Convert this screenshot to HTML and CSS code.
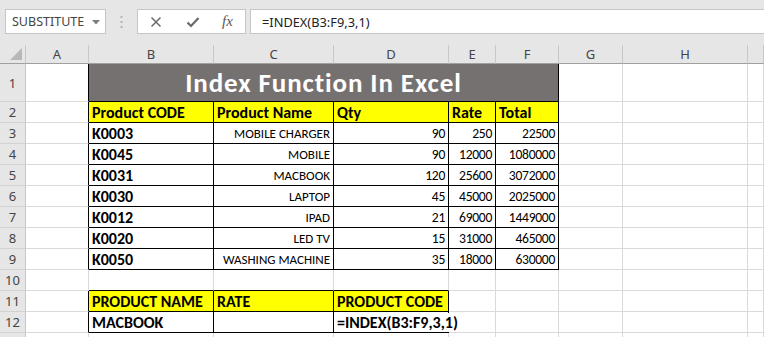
FILE: index.html
```html
<!DOCTYPE html>
<html>
<head>
<meta charset="utf-8">
<link rel="stylesheet" href="styles.css">
</head>
<body>
<div class="fbar">
  <div class="namebox"><span class="nametext">SUBSTITUTE</span><svg class="caret" width="8" height="5" viewBox="0 0 8 5"><path d="M0 0h8L4 4.5z" fill="#7b7b7b"/></svg></div>
  <div class="grip"><svg width="3" height="12" viewBox="0 0 3 12"><rect x="0.5" y="0" width="2" height="2" fill="#b4b4b4"/><rect x="0.5" y="5" width="2" height="2" fill="#b4b4b4"/><rect x="0.5" y="10" width="2" height="2" fill="#b4b4b4"/></svg></div>
  <div class="fxgroup">
    <svg class="ico" width="12" height="12" viewBox="0 0 12 12"><path d="M1.5 1.5l9 9M10.5 1.5l-9 9" stroke="#6a6a6a" stroke-width="1.5" fill="none"/></svg>
    <svg class="ico" width="14" height="12" viewBox="0 0 14 12"><path d="M1.5 6.5l3.5 3.5 7.5-8" stroke="#6a6a6a" stroke-width="2.2" fill="none"/></svg>
    <span class="fx">fx</span>
  </div>
  <div class="finput">=INDEX(B3:F9,3,1)</div>
</div>

<div class="sheet">
  <div class="corner"><svg width="12" height="12" viewBox="0 0 12 12"><path d="M12 0V12H0z" fill="#b8b8b8"/></svg></div>
  <div class="ch">A</div><div class="ch">B</div><div class="ch">C</div><div class="ch">D</div><div class="ch">E</div><div class="ch">F</div><div class="ch">G</div><div class="ch">H</div><div class="ch"></div>

  <div class="rh">1</div><div class="cell kb"></div><div class="cell title kb bb">Index Function In Excel</div><div class="cell"></div><div class="cell"></div><div class="cell"></div>

  <div class="rh">2</div><div class="cell kb"></div>
  <div class="cell y b kb bb">Product CODE</div><div class="cell y b kb bb">Product Name</div><div class="cell y b kb bb">Qty</div><div class="cell y b kb bb">Rate</div><div class="cell y b kb bb">Total</div>
  <div class="cell"></div><div class="cell"></div><div class="cell"></div>

  <div class="rh">3</div><div class="cell kb"></div>
  <div class="cell b kb bb">K0003</div><div class="cell sm r kb bb">MOBILE CHARGER</div><div class="cell n r kb bb">90</div><div class="cell n r kb bb">250</div><div class="cell n r kb bb">22500</div>
  <div class="cell"></div><div class="cell"></div><div class="cell"></div>

  <div class="rh">4</div><div class="cell kb"></div>
  <div class="cell b kb bb">K0045</div><div class="cell sm r kb bb">MOBILE</div><div class="cell n r kb bb">90</div><div class="cell n r kb bb">12000</div><div class="cell n r kb bb">1080000</div>
  <div class="cell"></div><div class="cell"></div><div class="cell"></div>

  <div class="rh">5</div><div class="cell kb"></div>
  <div class="cell b kb bb">K0031</div><div class="cell sm r kb bb">MACBOOK</div><div class="cell n r kb bb">120</div><div class="cell n r kb bb">25600</div><div class="cell n r kb bb">3072000</div>
  <div class="cell"></div><div class="cell"></div><div class="cell"></div>

  <div class="rh">6</div><div class="cell kb"></div>
  <div class="cell b kb bb">K0030</div><div class="cell sm r kb bb">LAPTOP</div><div class="cell n r kb bb">45</div><div class="cell n r kb bb">45000</div><div class="cell n r kb bb">2025000</div>
  <div class="cell"></div><div class="cell"></div><div class="cell"></div>

  <div class="rh">7</div><div class="cell kb"></div>
  <div class="cell b kb bb">K0012</div><div class="cell sm r kb bb">IPAD</div><div class="cell n r kb bb">21</div><div class="cell n r kb bb">69000</div><div class="cell n r kb bb">1449000</div>
  <div class="cell"></div><div class="cell"></div><div class="cell"></div>

  <div class="rh">8</div><div class="cell kb"></div>
  <div class="cell b kb bb">K0020</div><div class="cell sm r kb bb">LED TV</div><div class="cell n r kb bb">15</div><div class="cell n r kb bb">31000</div><div class="cell n r kb bb">465000</div>
  <div class="cell"></div><div class="cell"></div><div class="cell"></div>

  <div class="rh">9</div><div class="cell kb"></div>
  <div class="cell b kb bb">K0050</div><div class="cell sm r kb bb">WASHING MACHINE</div><div class="cell n r kb bb">35</div><div class="cell n r kb bb">18000</div><div class="cell n r kb bb">630000</div>
  <div class="cell"></div><div class="cell"></div><div class="cell"></div>

  <div class="rh">10</div><div class="cell"></div>
  <div class="cell bb"></div><div class="cell bb"></div><div class="cell bb"></div><div class="cell"></div><div class="cell"></div>
  <div class="cell"></div><div class="cell"></div><div class="cell"></div>

  <div class="rh">11</div><div class="cell kb"></div>
  <div class="cell y b kb bb">PRODUCT NAME</div><div class="cell y b kb bb">RATE</div><div class="cell y b kb bb">PRODUCT CODE</div><div class="cell"></div><div class="cell"></div>
  <div class="cell"></div><div class="cell"></div><div class="cell"></div>

  <div class="rh">12</div><div class="cell kb"></div>
  <div class="cell b kb bb">MACBOOK</div><div class="cell kb bb"></div><div class="cell b kb bb over"><span class="overtext">=INDEX(B3:F9,3,1)</span></div><div class="cell"></div><div class="cell"></div>
  <div class="cell"></div><div class="cell"></div><div class="cell"></div>

  <div class="rh"></div><div class="cell"></div>
  <div class="cell"></div><div class="cell"></div><div class="cell"></div><div class="cell"></div><div class="cell"></div>
  <div class="cell"></div><div class="cell"></div><div class="cell"></div>
</div>
</body>
</html>
```
FILE: styles.css
```css
html, body {
  margin: 0;
  padding: 0;
  background: #ffffff;
  overflow: hidden;
}
body {
  width: 764px;
  height: 337px;
  font-family: "Carlito", "Lato", "Liberation Sans", sans-serif;
}

/* formula bar */
.fbar {
  height: 45px;
  box-sizing: border-box;
  padding-top: 9px;
  background: #e6e6e6;
  display: flex;
  align-items: flex-start;
}
.namebox {
  margin-left: 5px;
  width: 101px;
  height: 25px;
  box-sizing: border-box;
  border: 1px solid #c6c6c6;
  background: #fff;
  display: flex;
  align-items: center;
  padding-left: 6px;
  padding-right: 5px;
}
.nametext {
  font-family: "Noto Sans", "Open Sans", sans-serif;
  font-size: 12.5px;
  color: #444;
  flex: 1;
}
.caret { margin-top: 1px; }
.grip {
  width: 31px;
  height: 25px;
  display: flex;
  align-items: center;
  justify-content: center;
}
.fxgroup {
  width: 109px;
  height: 25px;
  box-sizing: border-box;
  border: 1px solid #c6c6c6;
  background: #fff;
  display: flex;
  align-items: center;
  padding-left: 12px;
  gap: 24px;
}
.fx {
  font-family: "Liberation Serif", serif;
  font-style: italic;
  font-size: 15px;
  color: #5a5a5a;
  margin-left: -2px;
}
.finput {
  margin-left: 4px;
  flex: 1;
  height: 25px;
  box-sizing: border-box;
  border: 1px solid #c6c6c6;
  border-right: none;
  background: #fff;
  display: flex;
  align-items: center;
  padding-left: 11px;
  font-family: "Noto Sans", "Open Sans", sans-serif;
  font-size: 12.8px;
  color: #222;
}

/* sheet grid */
.sheet {
  display: grid;
  grid-template-columns: 26px 63px 125px 120px 115px 47px 63px 64px 125px 1fr;
  grid-template-rows: 19px 38px repeat(12, 21px);
}
.corner, .ch, .rh {
  background: #e6e6e6;
  box-sizing: border-box;
  color: #444;
  font-family: "Noto Sans", "Open Sans", sans-serif;
  font-size: 13px;
}
.corner {
  border-right: 1px solid #c8c8c8;
  border-bottom: 1px solid #a0a0a0;
  display: flex;
  align-items: flex-end;
  justify-content: flex-end;
  padding: 0 3px 3px 0;
}
.ch {
  border-right: 1px solid #c8c8c8;
  border-bottom: 1px solid #a0a0a0;
  display: flex;
  align-items: center;
  justify-content: center;
}
.rh {
  border-right: 1px solid #c8c8c8;
  border-bottom: 1px solid #d2d2d2;
  display: flex;
  align-items: center;
  justify-content: center;
}
.cell {
  box-sizing: border-box;
  border-right: 1px solid #dadada;
  border-bottom: 1px solid #dadada;
  display: flex;
  align-items: center;
  padding: 0 3px;
  white-space: nowrap;
  font-size: 14px;
  color: #000;
  min-width: 0;
}
.kb { border-right-color: #000; }
.bb { border-bottom-color: #000; }
.y { background: #ffff00; }
.b { font-weight: bold; font-size: 16px; }
.r { justify-content: flex-end; }
.n { font-size: 13.6px; letter-spacing: -0.3px; }
.sm { font-size: 13px; }
.over { overflow: visible; position: relative; z-index: 1; }
.overtext {
  background: #fff;
  line-height: 19px;
}
.title {
  grid-column: span 5;
  background: #767171;
  color: #fff;
  font-weight: bold;
  font-size: 27px;
  letter-spacing: 0.9px;
  justify-content: center;
}
```
